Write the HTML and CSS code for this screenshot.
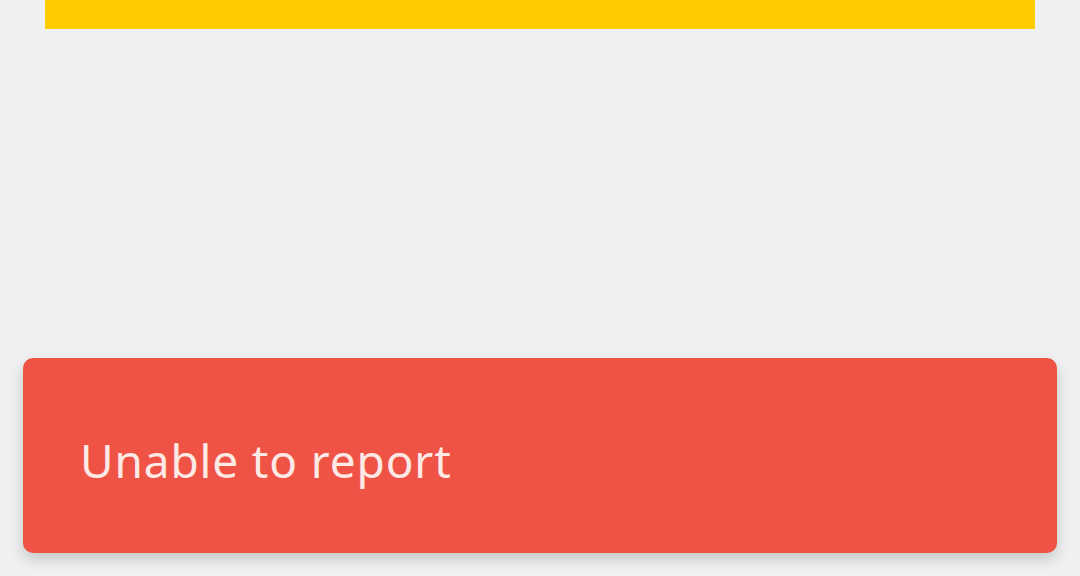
FILE: index.html
```html
<!DOCTYPE html>
<html>
<head>
<meta charset="utf-8">
<link rel="stylesheet" href="styles.css">
</head>
<body>
<div class="page">
  <div class="banner"></div>
  <div class="snackbar">
    <span class="message">Unable to report</span>
  </div>
</div>
</body>
</html>
```
FILE: styles.css
```css
html, body {
  margin: 0;
  padding: 0;
  background: #eff0f2;
  width: 1080px;
  height: 576px;
  overflow: hidden;
}
.page {
  display: flex;
  flex-direction: column;
}
.banner {
  height: 29px;
  margin: 0 45px;
  background: #ffcc00;
}
.snackbar {
  margin: 329px 23px 0 23px;
  height: 195px;
  background: #ef5345;
  border-radius: 10px;
  box-shadow: 0 6px 14px rgba(0, 0, 0, 0.18);
  display: flex;
  align-items: center;
  padding-left: 57px;
  box-sizing: border-box;
}
.message {
  font-family: "Noto Sans", "Open Sans", sans-serif;
  font-size: 46px;
  color: #fde9e5;
  letter-spacing: 0.85px;
  margin-top: 8px;
}
```
